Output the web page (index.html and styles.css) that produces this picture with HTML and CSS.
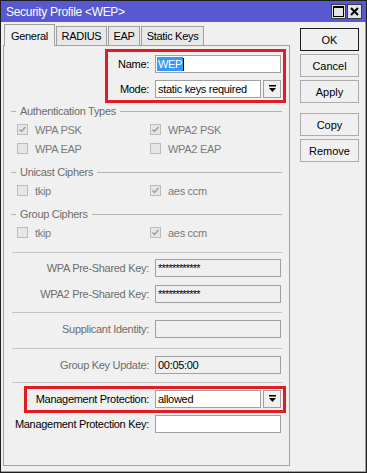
FILE: index.html
```html
<!DOCTYPE html>
<html lang="en">
<head>
    <meta charset="UTF-8">
    <meta name="viewport" content="width=device-width, initial-scale=1.0">
    <title>Security Profile &lt;WEP&gt;</title>
    <link rel="stylesheet" href="styles.css">
</head>
<body>
    <div class="window">
        <div class="titlebar">
            <span class="title">Security Profile &lt;WEP&gt;</span>
            <div class="title-buttons">
                <span class="tbtn">
                    <svg width="11" height="11" viewBox="0 0 11 11"><rect x="0.5" y="0.5" width="10" height="10" fill="none" stroke="#000"/><rect x="0" y="0" width="11" height="2" fill="#000"/></svg>
                </span>
                <span class="tbtn">
                    <svg width="9" height="9" viewBox="0 0 9 9"><path d="M1 1L8 8M8 1L1 8" stroke="#000" stroke-width="2"/></svg>
                </span>
            </div>
        </div>

        <div class="main">
            <div class="tabs-area">
                <div class="tabstrip">
                    <span class="tab active tab-general">General</span>
                    <span class="tab tab-radius">RADIUS</span>
                    <span class="tab tab-eap">EAP</span>
                    <span class="tab tab-static">Static Keys</span>
                </div>

                <div class="panel">
                    <div class="hl hl-top">
                        <div class="row">
                            <span class="lbl">Name:</span>
                            <div class="input"><span class="sel">WEP</span><span class="caret"></span></div>
                        </div>
                        <div class="row">
                            <span class="lbl">Mode:</span>
                            <div class="combo">
                                <div class="input">static keys required</div>
                                <span class="drop"><svg width="9" height="8" viewBox="0 0 9 8"><rect x="1" y="0" width="7" height="1.5" fill="#000"/><path d="M1 3h7l-3.5 4z" fill="#000"/></svg></span>
                            </div>
                        </div>
                    </div>

                    <div class="group-title">Authentication Types</div>
                    <div class="checks">
                        <span class="check"><span class="box"><svg width="9" height="9" viewBox="0 0 9 9"><path d="M1.5 4.5L3.5 6.5L7.5 2" fill="none" stroke="#9c9c9c" stroke-width="1.4"/></svg></span>WPA PSK</span>
                        <span class="check"><span class="box"><svg width="9" height="9" viewBox="0 0 9 9"><path d="M1.5 4.5L3.5 6.5L7.5 2" fill="none" stroke="#9c9c9c" stroke-width="1.4"/></svg></span>WPA2 PSK</span>
                        <span class="check"><span class="box"></span>WPA EAP</span>
                        <span class="check"><span class="box"></span>WPA2 EAP</span>
                    </div>

                    <div class="group-title next">Unicast Ciphers</div>
                    <div class="checks">
                        <span class="check"><span class="box"></span>tkip</span>
                        <span class="check"><span class="box"><svg width="9" height="9" viewBox="0 0 9 9"><path d="M1.5 4.5L3.5 6.5L7.5 2" fill="none" stroke="#9c9c9c" stroke-width="1.4"/></svg></span>aes ccm</span>
                    </div>

                    <div class="group-title next">Group Ciphers</div>
                    <div class="checks">
                        <span class="check"><span class="box"></span>tkip</span>
                        <span class="check"><span class="box"><svg width="9" height="9" viewBox="0 0 9 9"><path d="M1.5 4.5L3.5 6.5L7.5 2" fill="none" stroke="#9c9c9c" stroke-width="1.4"/></svg></span>aes ccm</span>
                    </div>

                    <div class="sep sep-a"></div>
                    <div class="row off first">
                        <span class="lbl">WPA Pre-Shared Key:</span>
                        <div class="input off"><span class="stars">************</span></div>
                    </div>
                    <div class="row off psk2">
                        <span class="lbl">WPA2 Pre-Shared Key:</span>
                        <div class="input off"><span class="stars">************</span></div>
                    </div>

                    <div class="sep sep-b"></div>
                    <div class="row off after-sep">
                        <span class="lbl">Supplicant Identity:</span>
                        <div class="input off"></div>
                    </div>

                    <div class="sep sep-a"></div>
                    <div class="row off after-sep">
                        <span class="lbl">Group Key Update:</span>
                        <div class="input off">00:05:00</div>
                    </div>

                    <div class="sep sep-c"></div>
                    <div class="hl hl-bottom">
                        <div class="row">
                            <span class="lbl">Management Protection:</span>
                            <div class="combo">
                                <div class="input">allowed</div>
                                <span class="drop"><svg width="9" height="8" viewBox="0 0 9 8"><rect x="1" y="0" width="7" height="1.5" fill="#000"/><path d="M1 3h7l-3.5 4z" fill="#000"/></svg></span>
                            </div>
                        </div>
                    </div>
                    <div class="row key">
                        <span class="lbl">Management Protection Key:</span>
                        <div class="input"></div>
                    </div>
                </div>
            </div>

            <div class="buttons">
                <button class="btn default">OK</button>
                <button class="btn">Cancel</button>
                <button class="btn">Apply</button>
                <button class="btn spaced">Copy</button>
                <button class="btn">Remove</button>
            </div>
        </div>
    </div>
</body>
</html>
```

FILE: styles.css
```css
body {
    margin: 0;
    background: #f0f0f0;
}
.window {
    width: 367px;
    height: 473px;
    box-sizing: border-box;
    border: 1px solid #1e1e1e;
    box-shadow: inset -1px -1px 0 #a0a0a0;
    background: #f0f0f0;
    display: flex;
    flex-direction: column;
    font-family: "Liberation Sans", Arial, sans-serif;
    font-size: 11px;
    letter-spacing: -0.3px;
    color: #000;
}
.titlebar {
    height: 21px;
    flex-shrink: 0;
    background: #5858d0;
    color: #fff;
    font-size: 12px;
    display: flex;
    align-items: center;
    justify-content: space-between;
    padding: 0 4px 0 5px;
}
.title-buttons {
    display: flex;
    gap: 1px;
}
.tbtn {
    width: 15px;
    height: 15px;
    box-sizing: border-box;
    border: 1px solid #3a3a3a;
    background: #e4e4e4;
    display: flex;
    align-items: center;
    justify-content: center;
}
.main {
    flex: 1;
    display: flex;
}
.tabs-area {
    width: 287px;
    margin-left: 2px;
    padding-top: 2px;
    display: flex;
    flex-direction: column;
}
.tabstrip {
    height: 22px;
    margin-bottom: -1px;
    padding-left: 1px;
    display: flex;
    align-items: flex-start;
    gap: 1px;
}
.tab {
    height: 19px;
    margin-top: 2px;
    box-sizing: border-box;
    border: 1px solid #a0a0a0;
    border-bottom: none;
    background: #e8e8e8;
    display: flex;
    align-items: center;
    justify-content: center;
}
.tab.active {
    height: 22px;
    margin-top: 0;
    background: #f0f0f0;
    position: relative;
    z-index: 1;
}
.tab-general { width: 51px; }
.tab-radius { width: 51px; }
.tab-eap { width: 32px; }
.tab-static { width: 63px; }
.panel {
    flex: 1;
    margin-bottom: 6px;
    border: 1px solid #a0a0a0;
    display: flex;
    flex-direction: column;
}

/* red highlight frames */
.hl {
    border: 3px solid #e31b23;
    display: flex;
    flex-direction: column;
    gap: 7px;
    padding-right: 2px;
}
.hl-top {
    margin: 3px 3px 0 101px;
    padding-top: 3px;
    padding-bottom: 2px;
}
.hl-bottom {
    margin: 3px 3px 0 20px;
    padding-top: 1px;
    padding-bottom: 2px;
}

/* form rows */
.row {
    height: 18px;
    display: flex;
    justify-content: flex-end;
    align-items: center;
    gap: 6px;
}
.panel > .row {
    padding-right: 8px;
}
.row.off .lbl {
    color: #6d6d6d;
}
.row.first { margin-top: 6px; }
.row.psk2 { margin-top: 8px; }
.row.after-sep { margin-top: 7px; }
.row.key { margin-top: 2px; }
.input {
    width: 126px;
    height: 18px;
    box-sizing: border-box;
    border: 1px solid #a0a0a0;
    background: #fff;
    padding-left: 2px;
    display: flex;
    align-items: center;
    white-space: nowrap;
    overflow: hidden;
}
.input.off {
    background: #f0f0f0;
}
.combo {
    display: flex;
    gap: 2px;
}
.combo .input {
    width: 106px;
}
.drop {
    width: 18px;
    height: 18px;
    box-sizing: border-box;
    border: 1px solid #a0a0a0;
    background: #f0f0f0;
    display: flex;
    align-items: center;
    justify-content: center;
}
.sel {
    margin-left: -1px;
    padding: 1px 1px;
    background: #3399ff;
    color: #fff;
}
.caret {
    width: 1px;
    height: 13px;
    background: #000;
}
.stars {
    letter-spacing: -0.8px;
}

/* group headings and checkboxes */
.group-title {
    height: 14px;
    margin-top: 1px;
    display: flex;
    align-items: center;
    gap: 4px;
    color: #6d6d6d;
}
.group-title::before {
    content: "";
    width: 5px;
    margin-left: 7px;
    border-top: 1px solid #b4b4b4;
}
.group-title::after {
    content: "";
    flex: 1;
    margin-right: 7px;
    border-top: 1px solid #b4b4b4;
}
.group-title.next {
    margin-top: 7px;
}
.checks {
    margin-top: 2px;
    padding-left: 13px;
    display: grid;
    grid-template-columns: 133px 1fr;
    grid-auto-rows: 19px;
}
.check {
    display: flex;
    align-items: center;
    gap: 7px;
    color: #7a7a7a;
}
.box {
    width: 11px;
    height: 11px;
    box-sizing: border-box;
    border: 1px solid #bcbcbc;
    background: #e6e6e6;
    display: flex;
    align-items: center;
    justify-content: center;
}
.sep {
    border-top: 1px solid #c4c4c4;
    margin: 0 7px 0 8px;
}
.sep-a { margin-top: 10px; }
.sep-b { margin-top: 9px; }
.sep-c { margin-top: 8px; }

/* right-hand buttons */
.buttons {
    width: 59px;
    margin-left: 10px;
    padding-top: 6px;
    display: flex;
    flex-direction: column;
    gap: 3px;
}
.btn {
    height: 23px;
    box-sizing: border-box;
    padding: 0;
    border: 1px solid #acacac;
    background: #f0f0f0;
    font: inherit;
    color: #000;
}
.btn.default {
    border-color: #1a1a1a;
}
.btn.spaced {
    margin-top: 7px;
}
```
